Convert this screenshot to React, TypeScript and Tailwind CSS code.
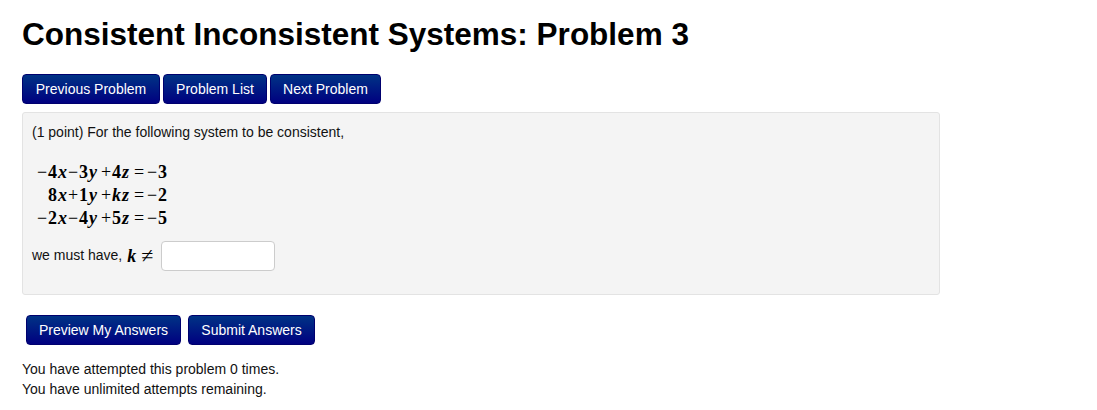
const btn =
  "h-[30px] rounded-[4px] border border-[#00006e] bg-linear-to-b/srgb from-[#003385] to-[#000080] text-[14px] leading-[20px] text-white"

function Op({ c }: { c: string }) {
  return <span className="inline-block w-[12px] text-center font-normal">{c}</span>
}

function Term({ sign, n, v }: { sign?: string; n: string; v: string }) {
  return (
    <span>
      {sign && <Op c={sign} />}
      {n === "k" ? <i>k</i> : n}
      <i className="inline-block w-[10px] pl-[1px]">{v}</i>
    </span>
  )
}

function EqRow({ a, b, c, r }: { a: any; b: any; c: any; r: string }) {
  return (
    <div className="flex h-[23px] items-center">
      <span className="w-[35px] text-right whitespace-nowrap">{a}</span>
      <span className="w-[33px] whitespace-nowrap">{b}</span>
      <span className="w-[32px] whitespace-nowrap">{c}</span>
      <span className="w-[14px] text-center font-normal">=</span>
      <Op c="−" />
      <span>{r}</span>
    </div>
  )
}

export default function App() {
  return (
    <div className="h-[410px] w-[1097px] overflow-hidden bg-white px-[22px] font-['Liberation_Sans',Arial,sans-serif] text-[14px] leading-[20px] text-[#111]">
      <h1 className="pt-[14px] text-[31.5px] font-bold leading-[40px] text-black">
        Consistent Inconsistent Systems: Problem 3
      </h1>

      <div className="mt-[20px] flex gap-[3px]">
        <button className={btn + " w-[138px]"}>Previous Problem</button>
        <button className={btn + " w-[104px]"}>Problem List</button>
        <button className={btn + " w-[111px]"}>Next Problem</button>
      </div>

      <div className="mt-[8px] h-[183px] w-[918px] rounded-[3px] border border-[#e3e3e3] bg-[#f4f4f4] px-[9px] pt-[9px]">
        <p>(1 point) For the following system to be consistent,</p>

        <div className="mt-[19px] font-['Liberation_Serif',serif] text-[18px] font-bold leading-[23px] text-black">
          <EqRow
            a={<Term sign="−" n="4" v="x" />}
            b={<Term sign="−" n="3" v="y" />}
            c={<Term sign="+" n="4" v="z" />}
            r="3"
          />
          <EqRow
            a={<Term n="8" v="x" />}
            b={<Term sign="+" n="1" v="y" />}
            c={<Term sign="+" n="k" v="z" />}
            r="2"
          />
          <EqRow
            a={<Term sign="−" n="2" v="x" />}
            b={<Term sign="−" n="4" v="y" />}
            c={<Term sign="+" n="5" v="z" />}
            r="5"
          />
        </div>

        <div className="mt-[11px] flex items-center">
          <span className="mb-[2px]">we must have,</span>
          <span className="ml-[5px] w-[11px] font-['Liberation_Serif',serif] text-[18px] font-bold italic text-black">k</span>
          <span className="ml-[2px] w-[14px] text-center font-['Liberation_Serif',serif] text-[22px] leading-none text-black">≠</span>
          <input
            type="text"
            className="ml-[7px] h-[30px] w-[114px] rounded-[4px] border border-[#ccc] bg-white"
          />
        </div>
      </div>

      <div className="mt-[20px] flex gap-[7px] pl-[4px]">
        <button className={btn + " w-[155px]"}>Preview My Answers</button>
        <button className={btn + " w-[127px]"}>Submit Answers</button>
      </div>

      <div className="mt-[14px]">
        <p>You have attempted this problem 0 times.</p>
        <p>You have unlimited attempts remaining.</p>
      </div>
    </div>
  )
}
